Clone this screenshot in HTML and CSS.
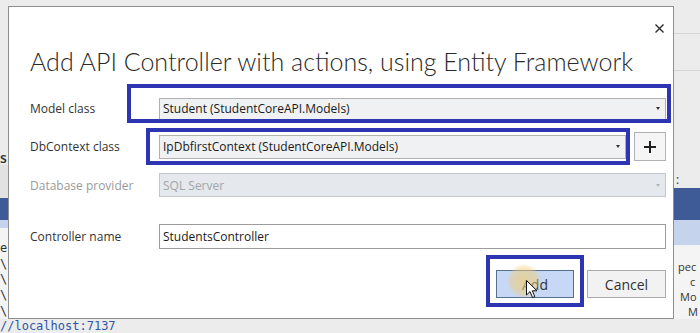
FILE: index.html
```html
<!DOCTYPE html>
<html lang="en">
<head>
    <meta charset="UTF-8">
    <meta name="viewport" content="width=device-width, initial-scale=1.0">
    <title>Add API Controller with actions, using Entity Framework</title>
    <link rel="stylesheet" href="styles.css">
</head>
<body>
<div class="screen">
    <!-- IDE behind the dialog -->
    <div class="ide">
        <div class="pane pane-left">
            <div class="band band-top"></div>
            <div class="band band-head">s</div>
            <div class="band band-tabs"></div>
            <div class="band band-dark"></div>
            <div class="band band-light"></div>
            <div class="band band-code">
                <div class="code-line">e</div>
                <div class="code-line">\</div>
                <div class="code-line">\</div>
                <div class="code-line">\</div>
                <div class="code-line">\</div>
            </div>
        </div>
        <div class="pane pane-mid"></div>
        <div class="pane pane-right">
            <div class="band band-top-r">
                <div class="rule rule-1"></div>
                <div class="rule rule-2"></div>
                <div class="colon">:</div>
            </div>
            <div class="band band-dark-r"></div>
            <div class="band band-light-r"></div>
            <div class="band band-code-r">
                <div class="side-line side-1">pec</div>
                <div class="side-line side-2">c</div>
                <div class="side-line side-3">Mo</div>
                <div class="side-line side-4">M</div>
            </div>
        </div>
        <div class="status">//localhost:7137</div>
    </div>

    <!-- Scaffold dialog -->
    <div class="dialog">
        <div class="dlg-head">
            <svg class="dlg-close" width="9" height="9" viewBox="0 0 9 9">
                <path d="M0.5 0.5 L8.5 8.5 M8.5 0.5 L0.5 8.5" stroke="#2b2b2b" stroke-width="1.4" fill="none"/>
            </svg>
        </div>
        <h1 class="dlg-title">Add API Controller with actions, using Entity Framework</h1>

        <div class="form">
            <div class="row row-model">
                <label class="lbl">Model class</label>
                <div class="combo combo-model"><span>Student (StudentCoreAPI.Models)</span><i class="caret"></i></div>
            </div>
            <div class="row row-ctx">
                <label class="lbl">DbContext class</label>
                <div class="combo-wrap">
                    <div class="combo"><span>IpDbfirstContext (StudentCoreAPI.Models)</span><i class="caret"></i></div>
                    <button class="btn-plus">
                        <svg width="12" height="12" viewBox="0 0 12 12">
                            <path d="M5 0 H7 V5 H12 V7 H7 V12 H5 V7 H0 V5 H5 Z" fill="#1f1f1f"/>
                        </svg>
                    </button>
                </div>
            </div>
            <div class="row row-provider">
                <label class="lbl lbl-off">Database provider</label>
                <div class="combo combo-off"><span>SQL Server</span><i class="caret"></i></div>
            </div>
            <div class="row row-name">
                <label class="lbl">Controller name</label>
                <div class="text-input">StudentsController</div>
            </div>
        </div>

        <div class="actions">
            <button class="btn btn-add">Add</button>
            <button class="btn">Cancel</button>
        </div>
    </div>

    <!-- annotation boxes and pointer drawn over the capture -->
    <div class="mark mark-model"></div>
    <div class="mark mark-ctx"></div>
    <div class="mark mark-add"></div>
    <div class="glow"></div>
    <svg class="pointer" width="13" height="19" viewBox="0 0 13 19">
        <path d="M0.5 0.5 L0.5 15 L4 11.6 L6.6 17.6 L8.8 16.6 L6.3 10.8 L11 10.8 Z" fill="#fff" stroke="#111" stroke-width="1"/>
    </svg>
</div>
</body>
</html>
```

FILE: styles.css
```css
body {
    margin: 0;
    background: #ececec;
}
.screen {
    position: relative;
    width: 700px;
    height: 333px;
    overflow: hidden;
    font-family: "Open Sans", "Noto Sans", sans-serif;
}

/* ---- IDE background ---- */
.ide {
    display: grid;
    grid-template-columns: 8px 1fr 26px;
    grid-template-rows: 319px 14px;
    height: 333px;
    background: #ececec;
}
.pane {
    display: flex;
    flex-direction: column;
    overflow: hidden;
}
.band {
    flex-shrink: 0;
}
.band-top {
    height: 150px;
}
.band-head {
    height: 15px;
    font-size: 14px;
    line-height: 15px;
    font-weight: 600;
    color: #333;
}
.band-tabs {
    height: 33px;
    background: #e2e2e2;
}
.band-dark {
    height: 22px;
    background: #3f5b97;
}
.band-light {
    height: 8px;
    background: #c6d3ec;
}
.band-code {
    flex: 1 1 0;
    min-height: 0;
    background: #f4f4f4;
    padding-top: 13px;
    font-family: "DejaVu Sans Mono", monospace;
    font-size: 12px;
    line-height: 15.7px;
    color: #333;
}
.band-top-r {
    height: 188px;
}
.rule {
    height: 1px;
    background: #d6d6d6;
}
.rule-1 {
    margin-top: 33px;
}
.rule-2 {
    margin-top: 36px;
}
.colon {
    margin-top: 100px;
    padding-left: 2px;
    font-size: 12px;
    line-height: 17px;
    color: #333;
}
.band-dark-r {
    height: 32px;
    background: #3f5b97;
}
.band-light-r {
    height: 25px;
    background: #c6d3ec;
}
.band-code-r {
    flex: 1 1 0;
    min-height: 0;
    background: #f4f4f4;
    padding-top: 14px;
    font-size: 11px;
    line-height: 15px;
    color: #333;
}
.side-1 {
    padding-left: 4px;
}
.side-2 {
    padding-left: 16px;
}
.side-3 {
    padding-left: 6px;
}
.side-4 {
    padding-left: 14px;
}
.status {
    grid-column: 1 / -1;
    padding-top: 1px;
    font-family: "DejaVu Sans Mono", monospace;
    font-size: 12px;
    line-height: 13px;
    color: #2d56a8;
}

/* ---- dialog ---- */
.dialog {
    position: absolute;
    left: 8px;
    top: 6px;
    width: 666px;
    height: 313px;
    box-sizing: border-box;
    border: 1px solid #8f8f8f;
    background: #fff;
    padding: 0 7px 0 21px;
    display: flex;
    flex-direction: column;
    color: #1e1e1e;
}
.dlg-head {
    height: 38px;
    box-sizing: border-box;
    padding: 17px 2px 0 0;
    display: flex;
    justify-content: flex-end;
    align-items: flex-start;
}
.dlg-title {
    margin: 0;
    font-family: "Lato", "Open Sans", sans-serif;
    font-size: 25px;
    font-weight: 300;
    line-height: 32px;
    color: #2a2a2a;
    white-space: nowrap;
}
.form {
    margin-top: 20px;
    display: flex;
    flex-direction: column;
}
.row {
    display: grid;
    grid-template-columns: 129px 1fr;
    align-items: center;
}
.row-model {
    height: 23px;
}
.row-ctx {
    height: 29px;
    margin-top: 12px;
}
.row-provider {
    height: 24px;
    margin-top: 12px;
}
.row-name {
    height: 25px;
    margin-top: 27px;
}
.lbl {
    font-size: 12px;
    color: #333;
}
.lbl-off {
    color: #9a9a9a;
}
.combo {
    height: 24px;
    box-sizing: border-box;
    border: 1px solid #b1b1b1;
    background: #f0f1f2;
    padding: 0 5px 0 3px;
    display: flex;
    align-items: center;
    justify-content: space-between;
    font-size: 12px;
    color: #1a1a1a;
}
.combo-model {
    height: 22px;
}
.caret {
    width: 0;
    height: 0;
    border-left: 2.5px solid transparent;
    border-right: 2.5px solid transparent;
    border-top: 3px solid #333;
}
.combo-wrap {
    display: flex;
    align-items: center;
    gap: 8px;
}
.combo-wrap .combo {
    flex: 1;
}
.btn-plus {
    width: 32px;
    height: 29px;
    border: 1px solid #b1b1b1;
    background: #f5f5f5;
    display: flex;
    align-items: center;
    justify-content: center;
    padding: 0;
}
.combo-off {
    background: #e5e8ec;
    border-color: #c3c7cc;
    color: #a2a6ab;
}
.combo-off .caret {
    border-top-color: #b5b5b5;
}
.text-input {
    height: 25px;
    box-sizing: border-box;
    border: 1px solid #9c9c9c;
    background: #fff;
    padding: 0 3px;
    display: flex;
    align-items: center;
    font-size: 12px;
    color: #1a1a1a;
}
.actions {
    margin-top: 21px;
    display: flex;
    justify-content: flex-end;
    gap: 13px;
}
.btn {
    width: 79px;
    height: 28px;
    border: 1px solid #ababab;
    background: #f2f2f2;
    font-family: inherit;
    font-size: 14px;
    color: #333;
    padding: 0;
}
.btn-add {
    width: 78px;
    background: #c6d8f5;
    border-color: #56708c;
}

/* ---- overlays ---- */
.mark {
    position: absolute;
    box-sizing: border-box;
    border: 4px solid #2d35b3;
}
.mark-model {
    left: 127px;
    top: 84px;
    width: 544px;
    height: 39px;
}
.mark-ctx {
    left: 146px;
    top: 128px;
    width: 484px;
    height: 37px;
}
.mark-add {
    left: 486px;
    top: 255px;
    width: 98px;
    height: 52px;
}
.glow {
    position: absolute;
    left: 507px;
    top: 264px;
    width: 34px;
    height: 34px;
    border-radius: 50%;
    background: radial-gradient(circle, rgba(240, 205, 120, 0.75) 0%, rgba(240, 205, 120, 0.45) 55%, rgba(240, 205, 120, 0) 72%);
}
.pointer {
    position: absolute;
    left: 526px;
    top: 280px;
}
```
